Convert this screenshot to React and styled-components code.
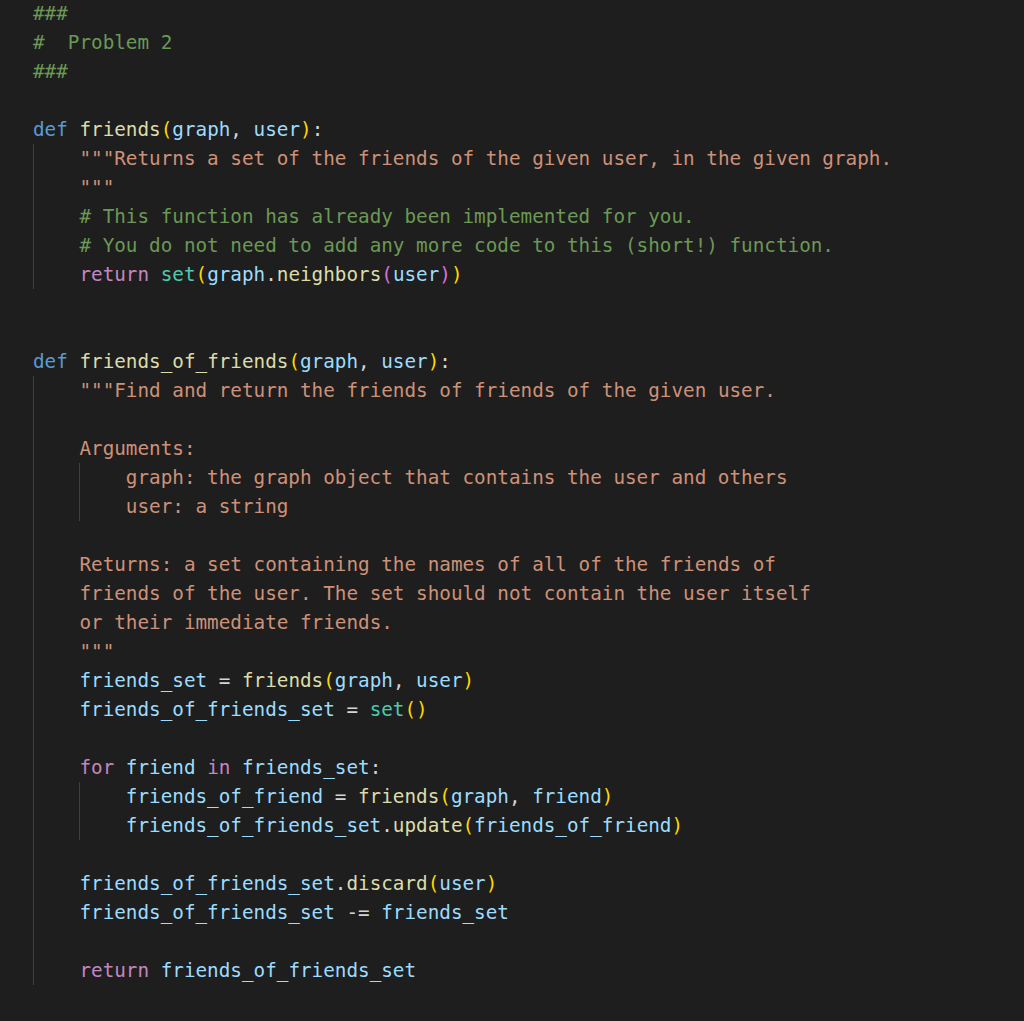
import React from "react";
import styled, { createGlobalStyle } from "styled-components";

const Global = createGlobalStyle`
  html, body {
    margin: 0;
    padding: 0;
    background: #1e1e1e;
  }
  body {
    height: 1021px;
    overflow: hidden;
  }
`;

const COLORS = {
  cm: "#6a9955",
  kw: "#569cd6",
  fn: "#dcdcaa",
  pa: "#9cdcfe",
  st: "#ce9178",
  ctl: "#c586c0",
  bi: "#4ec9b0",
  b1: "#ffd700",
  b2: "#da70d6",
  p: "#d4d4d4",
};

const Editor = styled.div`
  background: #1e1e1e;
  width: 1024px;
  height: 1021px;
  overflow: hidden;
  padding: 0 0 0 33px;
  box-sizing: border-box;
  margin-top: -1px;
  font-family: "DejaVu Sans Mono", "Liberation Mono", monospace;
  font-size: 19.3px;
  color: #d4d4d4;
`;

const Line = styled.div`
  display: flex;
  height: 29px;
  line-height: 29px;
  white-space: pre;
`;

const Guide = styled.span`
  display: inline-block;
  flex: none;
  width: 4ch;
  height: 29px;
  box-sizing: border-box;
  border-left: 1px solid #404040;
`;

const Code = styled.span`
  white-space: pre;
`;

const Tok = styled.span`
  color: ${(p) => COLORS[p.$k] || "#d4d4d4"};
`;

// [guides, tokens]
const LINES = [
  [0, [["###", "cm"]]],
  [0, [["#  Problem 2", "cm"]]],
  [0, [["###", "cm"]]],
  [0, []],
  [0, [["def", "kw"], [" ", "p"], ["friends", "fn"], ["(", "b1"], ["graph", "pa"], [", ", "p"], ["user", "pa"], [")", "b1"], [":", "p"]]],
  [1, [['"""Returns a set of the friends of the given user, in the given graph.', "st"]]],
  [1, [['"""', "st"]]],
  [1, [["# This function has already been implemented for you.", "cm"]]],
  [1, [["# You do not need to add any more code to this (short!) function.", "cm"]]],
  [1, [["return", "ctl"], [" ", "p"], ["set", "bi"], ["(", "b1"], ["graph", "pa"], [".", "p"], ["neighbors", "fn"], ["(", "b2"], ["user", "pa"], [")", "b2"], [")", "b1"]]],
  [0, []],
  [0, []],
  [0, [["def", "kw"], [" ", "p"], ["friends_of_friends", "fn"], ["(", "b1"], ["graph", "pa"], [", ", "p"], ["user", "pa"], [")", "b1"], [":", "p"]]],
  [1, [['"""Find and return the friends of friends of the given user.', "st"]]],
  [1, []],
  [1, [["Arguments:", "st"]]],
  [2, [["graph: the graph object that contains the user and others", "st"]]],
  [2, [["user: a string", "st"]]],
  [1, []],
  [1, [["Returns: a set containing the names of all of the friends of", "st"]]],
  [1, [["friends of the user. The set should not contain the user itself", "st"]]],
  [1, [["or their immediate friends.", "st"]]],
  [1, [['"""', "st"]]],
  [1, [["friends_set", "pa"], [" = ", "p"], ["friends", "fn"], ["(", "b1"], ["graph", "pa"], [", ", "p"], ["user", "pa"], [")", "b1"]]],
  [1, [["friends_of_friends_set", "pa"], [" = ", "p"], ["set", "bi"], ["(", "b1"], [")", "b1"]]],
  [1, []],
  [1, [["for", "ctl"], [" ", "p"], ["friend", "pa"], [" ", "p"], ["in", "ctl"], [" ", "p"], ["friends_set", "pa"], [":", "p"]]],
  [2, [["friends_of_friend", "pa"], [" = ", "p"], ["friends", "fn"], ["(", "b1"], ["graph", "pa"], [", ", "p"], ["friend", "pa"], [")", "b1"]]],
  [2, [["friends_of_friends_set", "pa"], [".", "p"], ["update", "fn"], ["(", "b1"], ["friends_of_friend", "pa"], [")", "b1"]]],
  [1, []],
  [1, [["friends_of_friends_set", "pa"], [".", "p"], ["discard", "fn"], ["(", "b1"], ["user", "pa"], [")", "b1"]]],
  [1, [["friends_of_friends_set", "pa"], [" -= ", "p"], ["friends_set", "pa"]]],
  [1, []],
  [1, [["return", "ctl"], [" ", "p"], ["friends_of_friends_set", "pa"]]],
];

export default function App() {
  return (
    <>
      <Global />
      <Editor>
        {LINES.map(([g, toks], i) => (
          <Line key={i}>
            {Array.from({ length: g }).map((_, j) => (
              <Guide key={j} />
            ))}
            <Code>
              {toks.map(([t, k], j) => (
                <Tok key={j} $k={k}>
                  {t}
                </Tok>
              ))}
            </Code>
          </Line>
        ))}
      </Editor>
    </>
  );
}
